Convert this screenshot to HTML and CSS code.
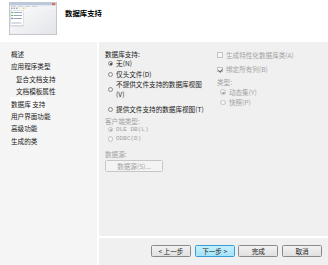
FILE: index.html
```html
<!doctype html>
<html>
<head>
<meta charset="utf-8">
<title>数据库支持</title>
<link rel="stylesheet" href="styles.css">
</head>
<body>
<div class="header">
	<svg class="thumb" viewBox="0 0 48 33" width="48" height="33">
		<defs>
			<linearGradient id="g1" x1="0" y1="0" x2="1" y2="1">
				<stop offset="0" stop-color="#ffffff"/>
				<stop offset="1" stop-color="#e2e4e8"/>
			</linearGradient>
		</defs>
		<rect x="0.5" y="0.5" width="47" height="32" fill="url(#g1)" stroke="#c4c6ca"/>
		<rect x="1" y="1" width="46" height="2.5" fill="#b9c9e2"/>
		<rect x="43" y="1.3" width="3" height="1.9" fill="#e0603c"/>
		<rect x="1" y="3.5" width="46" height="1.6" fill="#eef0f4"/>
		<rect x="2" y="3.8" width="5" height="1" fill="#c8ccd4"/>
		<rect x="9" y="3.8" width="5" height="1" fill="#c8ccd4"/>
		<rect x="16" y="3.8" width="5" height="1" fill="#c8ccd4"/>
		<rect x="23" y="3.8" width="5" height="1" fill="#c8ccd4"/>
		<rect x="1" y="5.3" width="46" height="2" fill="#f4f4f6"/>
		<rect x="2" y="5.6" width="1.5" height="1.4" fill="#9aa6bb"/>
		<rect x="4.5" y="5.6" width="1.5" height="1.4" fill="#9aa6bb"/>
		<rect x="7" y="5.6" width="1.5" height="1.4" fill="#9aa6bb"/>
		<rect x="14" y="5.6" width="1.5" height="1.4" fill="#e8c64e"/>
		<rect x="1.5" y="8.5" width="13" height="15.5" fill="#fff" stroke="#c9ccd2" stroke-width="0.5"/>
		<circle cx="3" cy="10.5" r="0.8" fill="#3aa03a"/>
		<rect x="4.5" y="10" width="8.5" height="1" fill="#9aa6bb"/>
		<circle cx="3" cy="13.5" r="0.8" fill="#3aa03a"/>
		<rect x="4.5" y="13" width="8.5" height="1" fill="#9aa6bb"/>
		<circle cx="3" cy="16.5" r="0.8" fill="#3a6ad0"/>
		<rect x="4.5" y="16" width="8.5" height="1" fill="#9aa6bb"/>
		<rect x="2.5" y="20.5" width="10" height="1" fill="#b4bac6"/>
		<rect x="2.5" y="23" width="12" height="1.2" fill="#d4d7dd"/>
	</svg>
	<div class="title">数据库支持</div>
</div>
<div class="main">
	<ul class="nav">
		<li>概述</li>
		<li>应用程序类型</li>
		<li class="sub">复合文档支持</li>
		<li class="sub">文档模板属性</li>
		<li class="cur"><span>数据库 支持</span></li>
		<li>用户界面功能</li>
		<li>高级功能</li>
		<li>生成的类</li>
	</ul>
	<div class="content">
		<div class="options">
			<div class="col-left">
				<div class="label">数据库支持:</div>
				<div class="row r-none"><span class="radio on"></span>无(<u>N</u>)</div>
				<div class="row r-head"><span class="radio"></span>仅头文件(<u>D</u>)</div>
				<div class="row two r-view"><span class="radio"></span><span>不提供文件支持的数据库视图<br>(<u>V</u>)</span></div>
				<div class="row r-file"><span class="radio"></span>提供文件支持的数据库视图(<u>T</u>)</div>
				<div class="label dis l-client">客户端类型:</div>
				<div class="row dis r-ole"><span class="radio on"></span><span class="lat">OLE DB(<u>L</u>)</span></div>
				<div class="row dis r-odbc"><span class="radio"></span><span class="lat">ODBC(<u>D</u>)</span></div>
				<div class="label dis l-src">数据源:</div>
				<div class="btn src">数据源(<u>S</u>)...</div>
			</div>
			<div class="col-right dis">
				<div class="row c-gen"><span class="check"></span>生成特性化数据库类(<u>A</u>)</div>
				<div class="row c-bind"><span class="check on"></span>绑定所有列(<u>B</u>)</div>
				<div class="label l-type">类型:</div>
				<div class="row t-dyn"><span class="radio on"></span>动态集(<u>Y</u>)</div>
				<div class="row t-snap"><span class="radio"></span>快照(<u>P</u>)</div>
			</div>
		</div>
		<div class="buttons">
			<div class="btn">&lt; 上一步</div>
			<div class="btn def">下一步 &gt;</div>
			<div class="btn">完成</div>
			<div class="btn">取消</div>
		</div>
	</div>
</div>
</body>
</html>
```

FILE: styles.css
```css
*{margin:0;padding:0;list-style:none;box-sizing:border-box;}
body{background:#f0f0f0;font-family:"Noto Sans CJK SC","Noto Sans",sans-serif;font-size:6.6px;color:#1a1a1a;width:328px;height:265px;overflow:hidden;}
u{text-decoration:none;}

.header{height:42px;background:#fff;display:flex;}
.thumb{display:block;margin:2px 0 0 9px;}
.title{margin:8px 0 0 8px;font-size:7.4px;font-weight:bold;line-height:10px;color:#000;}

.main{display:flex;height:223px;}
.nav{width:99px;background:#f5f5f5;border-right:2px solid #fff;padding-top:5.8px;}
.nav li{height:12.4px;line-height:12.4px;padding-left:11px;white-space:nowrap;}
.nav li.sub{padding-left:16px;}
.nav li.cur span{background:#fdfdfd;padding:1.5px 1px;margin-left:-1px;}

.content{flex:1;display:flex;flex-direction:column;}
.options{height:196px;border-bottom:2px solid #fff;display:flex;padding:8px 0 0 6px;}
.col-left{width:112px;}
.col-right{flex:1;}

.label{height:8px;line-height:8px;white-space:nowrap;}
.row{display:flex;align-items:center;height:9px;line-height:9px;padding-left:2.5px;white-space:nowrap;}
.row.two{height:19px;line-height:9.6px;}
.dis{color:#a3a3a3;}
.lat{font-family:"Liberation Mono",monospace;font-size:6px;}

.r-none{margin-top:1px;}
.r-head{margin-top:2px;}
.r-view{margin-top:1px;}
.r-file{margin-top:6px;}
.l-client{margin-top:2.5px;}
.r-ole{margin-top:0.5px;}
.r-odbc{margin-top:0.3px;}
.l-src{margin-top:7.2px;}

.col-right .row{padding-left:0;}
.c-gen{margin-top:0.5px;}
.c-bind{margin-top:5.3px;}
.l-type{margin-top:3.9px;}
.col-right .t-dyn,.col-right .t-snap{padding-left:3.3px;}
.t-dyn{margin-top:2.1px;}
.t-snap{margin-top:1.4px;}

.radio{position:relative;width:5.6px;height:5.6px;border-radius:50%;border:0.8px solid #8a8a8a;background:linear-gradient(135deg,#e4e4e4,#fff);margin-right:3px;flex:none;}
.radio.on:after{content:"";position:absolute;left:1.1px;top:1.1px;width:2.2px;height:2.2px;border-radius:50%;background:#222;}
.dis .radio{border-color:#c2c2c2;background:#f4f4f4;}
.dis .radio.on:after{background:#a8a8a8;}

.check{position:relative;width:5.6px;height:5.6px;border:0.8px solid #c2c2c2;background:#f6f6f6;margin-right:3.4px;flex:none;}
.check.on:after{content:"";position:absolute;left:1.2px;top:0.2px;width:1.6px;height:3px;border:solid #6a6a6a;border-width:0 0.9px 0.9px 0;transform:rotate(40deg);}

.btn{height:11.6px;line-height:10px;text-align:center;border:0.8px solid #acacac;border-radius:1.5px;background:linear-gradient(#f2f2f2,#e0e0e0);white-space:nowrap;}
.btn.src{width:58px;margin-top:1.7px;color:#a3a3a3;background:#f4f4f4;border-color:#c6c6c6;}

.buttons{flex:1;display:flex;justify-content:flex-end;gap:3.7px;padding:7px 6px 0 0;}
.buttons .btn{width:40px;border-color:#8a8a8a;}
.buttons .btn.def{border-color:#3c9bd0;background:linear-gradient(#c4f0fd,#a4e2f8);}
```
